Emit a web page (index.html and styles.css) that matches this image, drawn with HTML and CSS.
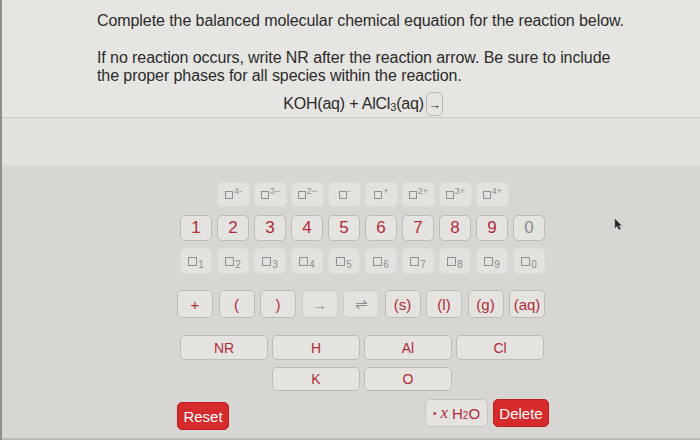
FILE: index.html
```html
<!DOCTYPE html>
<html lang="en">
<head>
<meta charset="utf-8">
<title>Balanced equation</title>
<link rel="stylesheet" href="styles.css">
</head>
<body>
<div class="page">
  <section class="question">
    <p class="title">Complete the balanced molecular chemical equation for the reaction below.</p>
    <p class="instr">If no reaction occurs, write NR after the reaction arrow. Be sure to include the proper phases for all species within the reaction.</p>
    <div class="equation"><span class="formula">KOH(aq) + AlCl<sub>3</sub>(aq)</span><span class="answer">→</span></div>
  </section>
  <div class="band"></div>
  <section class="panel">
    <div class="keypad">
      <div class="row sup">
        <span class="key soft"><i class="box"></i><sup>4-</sup></span>
        <span class="key soft"><i class="box"></i><sup>3−</sup></span>
        <span class="key soft"><i class="box"></i><sup>2−</sup></span>
        <span class="key soft"><i class="box"></i><sup>-</sup></span>
        <span class="key soft"><i class="box"></i><sup>+</sup></span>
        <span class="key soft"><i class="box"></i><sup>2+</sup></span>
        <span class="key soft"><i class="box"></i><sup>3+</sup></span>
        <span class="key soft"><i class="box"></i><sup>4+</sup></span>
      </div>
      <div class="row digits">
        <span class="key">1</span><span class="key">2</span><span class="key">3</span><span class="key">4</span><span class="key">5</span><span class="key">6</span><span class="key">7</span><span class="key">8</span><span class="key">9</span><span class="key muted">0</span>
      </div>
      <div class="row subs">
        <span class="key soft"><i class="box"></i><sub>1</sub></span>
        <span class="key soft"><i class="box"></i><sub>2</sub></span>
        <span class="key soft"><i class="box"></i><sub>3</sub></span>
        <span class="key soft"><i class="box"></i><sub>4</sub></span>
        <span class="key soft"><i class="box"></i><sub>5</sub></span>
        <span class="key soft"><i class="box"></i><sub>6</sub></span>
        <span class="key soft"><i class="box"></i><sub>7</sub></span>
        <span class="key soft"><i class="box"></i><sub>8</sub></span>
        <span class="key soft"><i class="box"></i><sub>9</sub></span>
        <span class="key soft"><i class="box"></i><sub>0</sub></span>
      </div>
      <div class="row symbols">
        <span class="key">+</span><span class="key">(</span><span class="key">)</span><span class="key muted light">→</span><span class="key muted light">⇌</span><span class="key">(s)</span><span class="key">(l)</span><span class="key">(g)</span><span class="key">(aq)</span>
      </div>
      <div class="row elements">
        <span class="key">NR</span><span class="key">H</span><span class="key">Al</span><span class="key">Cl</span>
      </div>
      <div class="row elements second">
        <span class="key">K</span><span class="key">O</span>
      </div>
      <div class="row actions">
        <span class="btn red reset">Reset</span>
        <span class="right">
          <span class="key water"><span class="dot">•</span><em>x</em>H<sub>2</sub>O</span>
          <span class="btn red">Delete</span>
        </span>
      </div>
    </div>
    <svg class="cursor" width="8" height="12" viewBox="0 0 8 12"><path d="M1 1 L1 10 L3 8 L5 11.5 L6.5 10.8 L4.6 7.6 L7.4 7.4 Z" fill="#222" stroke="#666" stroke-width="0.6"/></svg>
  </section>
</div>
</body>
</html>
```

FILE: styles.css
```css
html, body {
  margin: 0;
  padding: 0;
}
body {
  width: 700px;
  height: 440px;
  overflow: hidden;
  font-family: "Liberation Sans", Arial, sans-serif;
  background: #d7d6d2;
}
.page {
  width: 700px;
  height: 440px;
  display: flex;
  flex-direction: column;
  border-left: 2px solid #8e8e8a;
  box-sizing: border-box;
}
.question {
  background: #e6e5e1;
  height: 118px;
  box-sizing: border-box;
  padding: 11px 0 0 95px;
  border-bottom: 1px solid #cbcac6;
  color: #2b2b2b;
}
.title, .instr {
  margin: 0;
  width: 545px;
  font-size: 16px;
  line-height: 19px;
  letter-spacing: -0.08px;
}
.instr {
  width: 522px;
  margin-top: 19px;
  line-height: 18px;
}
.equation {
  width: 532px;
  margin-top: 7px;
  display: flex;
  justify-content: center;
  align-items: center;
  gap: 2px;
  height: 24px;
  font-size: 16px;
  letter-spacing: -0.2px;
}
.formula sub {
  font-size: 11px;
  line-height: 0;
  position: relative;
  top: 2px;
  vertical-align: baseline;
}
.answer {
  box-sizing: border-box;
  display: flex;
  align-items: center;
  justify-content: center;
  width: 17px;
  height: 24px;
  border: 1px solid #b9b8b4;
  border-radius: 5px;
  font-size: 13px;
  color: #333;
}
.band {
  height: 47px;
  background: #e2e1dd;
}
.panel {
  flex: 1;
  position: relative;
  background: #d7d6d2;
  border-bottom: 2px solid #bdbcb8;
}
.keypad {
  margin-left: 175px;
  width: 372px;
  padding-top: 17px;
  display: flex;
  flex-direction: column;
}
.row {
  display: flex;
}
.key {
  box-sizing: border-box;
  display: flex;
  align-items: center;
  justify-content: center;
  background: #e4e3df;
  border: 1px solid #bdbcb8;
  border-radius: 5px;
  color: #b02b3b;
  white-space: nowrap;
}
.key.soft {
  border-color: #dddcd8;
  background: #e3e2de;
  color: #8d8d8d;
}
.key.muted {
  color: #8b8b8b;
}
.key.light {
  border-color: #cfceca;
  background: #e3e2de;
}
.box {
  display: inline-block;
  width: 8px;
  height: 8px;
  border: 1px solid #8f8f8f;
  box-sizing: border-box;
}
.sup {
  margin-left: 40px;
  gap: 4px;
  height: 25px;
}
.sup .key {
  width: 33px;
  height: 25px;
}
.sup sup {
  font-size: 9px;
  line-height: 0;
  position: relative;
  top: -4px;
  margin-left: 1px;
}
.digits {
  margin-top: 8px;
  margin-left: 3px;
  gap: 5px;
}
.digits .key {
  width: 32px;
  height: 26px;
  font-size: 17px;
}
.subs {
  margin-top: 7px;
  margin-left: 3px;
  gap: 5px;
}
.subs .key {
  width: 32px;
  height: 26px;
}
.subs .box {
  width: 9px;
  height: 9px;
}
.subs sub {
  font-size: 10px;
  line-height: 0;
  position: relative;
  top: 4px;
  margin-left: 1px;
}
.symbols {
  margin-top: 16px;
  gap: 5.5px;
}
.symbols .key {
  width: 36px;
  height: 28px;
  font-size: 15px;
}
.elements {
  margin-top: 17px;
  margin-left: 3px;
  gap: 4px;
}
.elements .key {
  width: 88px;
  height: 25px;
  font-size: 14px;
}
.elements.second {
  margin-top: 7px;
  margin-left: 95px;
}
.elements.second .key {
  height: 24px;
}
.actions {
  margin-top: 8px;
  justify-content: space-between;
  align-items: flex-start;
}
.right {
  display: flex;
  gap: 5px;
}
.btn {
  box-sizing: border-box;
  display: flex;
  align-items: center;
  justify-content: center;
  height: 28px;
  border-radius: 5px;
  font-size: 15px;
  color: #fff;
}
.btn.red {
  background: #d52b2d;
  border: 1px solid #b91f23;
}
.reset {
  width: 52px;
  margin-top: 3px;
}
.right .btn {
  width: 56px;
}
.key.water {
  width: 63px;
  height: 28px;
  font-size: 15px;
  border-color: #c6c5c1;
}
.water .dot {
  font-size: 10px;
  margin-right: 4px;
}
.water em {
  font-family: "Liberation Serif", "Times New Roman", serif;
  font-style: italic;
  font-size: 17px;
  margin-right: 4px;
}
.water sub {
  font-size: 10px;
  line-height: 0;
  position: relative;
  top: 3px;
  vertical-align: baseline;
}
.cursor {
  position: absolute;
  left: 612px;
  top: 53px;
}
```
